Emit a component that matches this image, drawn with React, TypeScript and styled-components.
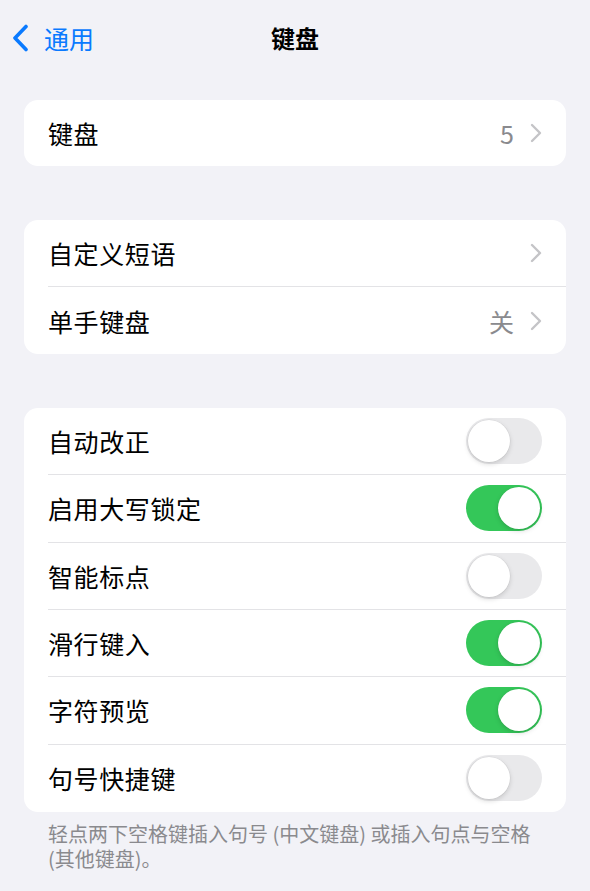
import React from 'react';
import styled, {createGlobalStyle} from 'styled-components';

const GlobalStyle = createGlobalStyle`
  html, body {
    margin: 0;
    padding: 0;
    background: #f2f2f7;
  }
  body {
    font-family: "Noto Sans CJK SC", "Noto Sans", sans-serif;
    -webkit-font-smoothing: antialiased;
  }
`;

const Page = styled.div`
  width: 590px;
  min-height: 891px;
  background: #f2f2f7;
  box-sizing: border-box;
`;

const NavBar = styled.header`
  height: 76px;
  display: grid;
  grid-template-columns: 1fr auto 1fr;
  align-items: center;
  padding: 0 12px;
  box-sizing: border-box;
`;

const BackButton = styled.div`
  display: flex;
  align-items: center;
  gap: 14px;
  color: #0a7aff;
  font-size: 25px;
  line-height: 1;
`;

const Title = styled.h1`
  margin: 0;
  font-size: 24px;
  font-weight: 700;
  color: #000;
  line-height: 1;
`;

const Content = styled.main`
  padding: 24px 24px 0;
  display: flex;
  flex-direction: column;
  gap: 54px;
`;

const Section = styled.section`
  display: flex;
  flex-direction: column;
`;

const Card = styled.div`
  background: #fff;
  border-radius: 14px;
  overflow: hidden;
`;

const Row = styled.div<{ $h: number; $last?: boolean }>`
  height: ${p => p.$h}px;
  display: flex;
  align-items: center;
  margin-left: 24px;
  padding-right: 24px;
  box-sizing: border-box;
  border-bottom: ${p => (p.$last ? 'none' : '1px solid #e3e3e6')};
`;

const Label = styled.span`
  flex: 1;
  font-size: 25px;
  letter-spacing: 0.6px;
  color: #000;
`;

const Value = styled.span`
  font-size: 25px;
  color: #8a8a8e;
  margin-right: 16px;
`;

const Footer = styled.p`
  margin: 9px 24px 0;
  font-size: 20px;
  line-height: 25px;
  color: #8a8a8e;
`;

const NoWrap = styled.span`
  white-space: nowrap;
`;

const Track = styled.div<{ $on: boolean }>`
  width: 76px;
  height: 46px;
  border-radius: 23px;
  background: ${p => (p.$on ? '#34c759' : '#e9e9eb')};
  display: flex;
  align-items: center;
  justify-content: ${p => (p.$on ? 'flex-end' : 'flex-start')};
  padding: 2px;
  box-sizing: border-box;
`;

const Knob = styled.div`
  width: 42px;
  height: 42px;
  border-radius: 50%;
  background: #fff;
  box-shadow: 0 2px 5px rgba(0, 0, 0, 0.15), 0 0 0 0.5px rgba(0, 0, 0, 0.06);
`;

function Chevron() {
    return (
        <svg width="12" height="20" viewBox="0 0 12 20" fill="none">
            <path d="M2 2 L10 10 L2 18" stroke="#c4c4c7" strokeWidth="2.4" strokeLinecap="round" strokeLinejoin="round"/>
        </svg>
    );
}

function BackChevron() {
    return (
        <svg width="18" height="28" viewBox="0 0 18 28" fill="none">
            <path d="M14 2.5 L3 14 L14 25.5" stroke="#0a7aff" strokeWidth="3.6" strokeLinecap="round" strokeLinejoin="round"/>
        </svg>
    );
}

function Toggle({on}: { on: boolean }) {
    return (
        <Track $on={on}>
            <Knob/>
        </Track>
    );
}

const toggles = [
    {label: '自动改正', on: false},
    {label: '启用大写锁定', on: true},
    {label: '智能标点', on: false},
    {label: '滑行键入', on: true},
    {label: '字符预览', on: true},
    {label: '句号快捷键', on: false},
];

export default function App() {
    return (
        <Page>
            <GlobalStyle/>
            <NavBar>
                <BackButton>
                    <BackChevron/>
                    <span>通用</span>
                </BackButton>
                <Title>键盘</Title>
                <div/>
            </NavBar>
            <Content>
                <Card>
                    <Row $h={66} $last>
                        <Label>键盘</Label>
                        <Value>5</Value>
                        <Chevron/>
                    </Row>
                </Card>
                <Card>
                    <Row $h={67}>
                        <Label>自定义短语</Label>
                        <Chevron/>
                    </Row>
                    <Row $h={67} $last>
                        <Label>单手键盘</Label>
                        <Value>关</Value>
                        <Chevron/>
                    </Row>
                </Card>
                <Section>
                    <Card>
                        {toggles.map((t, i) => (
                            <Row key={t.label} $h={67.33} $last={i === toggles.length - 1}>
                                <Label>{t.label}</Label>
                                <Toggle on={t.on}/>
                            </Row>
                        ))}
                    </Card>
                    <Footer>
                        轻点两下空格键插入句号 (中文键盘) 或插入句点与空格 <NoWrap>(其他键盘)。</NoWrap>
                    </Footer>
                </Section>
            </Content>
        </Page>
    );
}
